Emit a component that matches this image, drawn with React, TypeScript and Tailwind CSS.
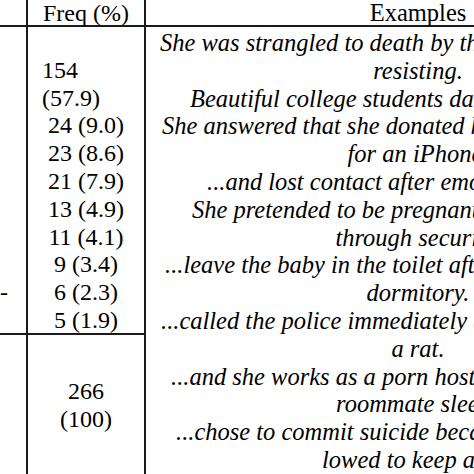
import React from "react";

type Ex = { text: string; pad?: string };

const examples: Ex[] = [
  { text: "She was strangled to death by the man after", pad: "pl-[14px] text-left" },
  { text: "resisting." },
  { text: "Beautiful college students dance in the", pad: "pl-[44px] text-left" },
  { text: "She answered that she donated kidney", pad: "pl-[16px] text-left" },
  { text: "for an iPhone." },
  { text: "...and lost contact after emotional", pad: "pl-[61px] text-left" },
  { text: "She pretended to be pregnant to pass", pad: "pl-[46px] text-left" },
  { text: "through security." },
  { text: "...leave the baby in the toilet after", pad: "pl-[19px] text-left" },
  { text: "dormitory." },
  { text: "...called the police immediately after", pad: "pl-[15px] text-left" },
  { text: "a rat." },
  { text: "...and she works as a porn host", pad: "pl-[25px] text-left" },
  { text: "roommate sleeping.", pad: "pl-[190px] text-left" },
  { text: "...chose to commit suicide because", pad: "pl-[30px] text-left" },
  { text: "lowed to keep a pet.", pad: "pl-[176px] text-left" },
];

const freqs = [
  "24 (9.0)",
  "23 (8.6)",
  "21 (7.9)",
  "13 (4.9)",
  "11 (4.1)",
  "9 (3.4)",
  "6 (2.3)",
  "5 (1.9)",
];

export default function App() {
  return (
    <div className="w-[474px] h-[474px] overflow-hidden bg-white text-black font-['Liberation_Serif','Times_New_Roman',serif] text-[24px]">
      <div className="w-[690px]">
        {/* Header */}
        <div className="flex h-[27px] border-b-2 border-[#1a1a1a] leading-[26px]">
          <div className="w-[28px] shrink-0 border-r-2 border-[#1a1a1a]" />
          <div className="w-[118px] shrink-0 border-r-2 border-[#1a1a1a] text-center whitespace-nowrap">
            Freq (%)
          </div>
          <div className="w-[544px] shrink-0 text-center whitespace-nowrap text-[24.5px]">Examples</div>
        </div>

        {/* Body */}
        <div className="flex">
          <div className="w-[146px] shrink-0 flex flex-col">
            <div className="flex h-[308px] border-b-2 border-[#1a1a1a] leading-[27.8px]">
              <div className="w-[28px] shrink-0 border-r-2 border-[#1a1a1a] pt-[2px]">
                <div className="h-[250.2px]" />
                <div className="whitespace-nowrap">-</div>
              </div>
              <div className="w-[118px] shrink-0 border-r-2 border-[#1a1a1a] pt-[2px] whitespace-nowrap">
                <div className="h-[27.8px]" />
                <div className="pl-[14px]">154</div>
                <div className="pl-[14px]">(57.9)</div>
                {freqs.map((f) => (
                  <div key={f} className="text-center">
                    {f}
                  </div>
                ))}
              </div>
            </div>
            <div className="flex h-[139px] leading-[27.8px]">
              <div className="w-[28px] shrink-0 border-r-2 border-[#1a1a1a]" />
              <div className="w-[118px] shrink-0 border-r-2 border-[#1a1a1a] pt-[43px] text-center whitespace-nowrap">
                <div>266</div>
                <div>(100)</div>
              </div>
            </div>
          </div>

          <div className="w-[544px] shrink-0 pt-[2px] italic text-[24.5px] leading-[27.8px]">
            {examples.map((e, i) => (
              <div key={i} className={`whitespace-nowrap ${e.pad ?? "text-center"}`}>
                {e.text}
              </div>
            ))}
          </div>
        </div>
      </div>
    </div>
  );
}
